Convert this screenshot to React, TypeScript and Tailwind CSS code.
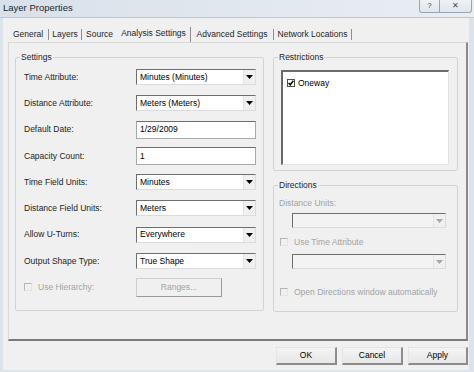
import React from 'react';

const Arrow = ({ disabled }: { disabled?: boolean }) => (
  <div className="w-[12px] h-full flex items-center justify-center bg-[#f0f0f0] border-l border-[#e2e2e2]">
    <svg width="7" height="4" viewBox="0 0 7 4">
      <path d="M0 0h7L3.5 4z" fill={disabled ? '#a8a8a8' : '#000'} />
    </svg>
  </div>
);

const Combo = ({ value, disabled, className = '' }: { value?: string; disabled?: boolean; className?: string }) => (
  <div
    className={`flex items-stretch border-t border-l border-[#6e6e6e] border-b border-r border-b-[#dcdcdc] border-r-[#dcdcdc] ${
      disabled ? 'bg-[#f3f3f3]' : 'bg-white'
    } ${className}`}
  >
    <div className="flex-1 flex items-center pl-[3px] text-black">{value}</div>
    <Arrow disabled={disabled} />
  </div>
);

const TextBox = ({ value }: { value: string }) => (
  <div className="w-[120px] h-[18px] bg-white border border-[#a9a9a9] border-t-[#6e6e6e] flex items-center pl-[3px] text-black">
    {value}
  </div>
);

const Check = ({ checked, disabled }: { checked?: boolean; disabled?: boolean }) => (
  <div
    className={`w-[8px] h-[8px] shrink-0 border ${
      disabled ? 'border-[#b5b5b5] border-b-[#e4e4e4] border-r-[#e4e4e4] bg-[#f0f0f0]' : 'border-[#4c4c4c] bg-white'
    } flex items-center justify-center`}
  >
    {checked && (
      <svg width="6" height="6" viewBox="0 0 6 6">
        <path d="M0.6 3l1.6 1.8L5.4 0.8" stroke="#000" strokeWidth="1.4" fill="none" />
      </svg>
    )}
  </div>
);

// group box; padding goes on the inner div so the legend stays near the corner
const Group = ({ title, className = '', inner = '', children }: { title: string; className?: string; inner?: string; children?: React.ReactNode }) => (
  <fieldset className={`border border-[#d3d3d3] rounded-[2px] ${className}`}>
    <legend className="ml-[4px] px-[1px] leading-[10px] text-[#1e1e1e]">{title}</legend>
    <div className={inner}>{children}</div>
  </fieldset>
);

const tabs = [
  { label: 'General', w: 'w-[41px]', sep: true },
  { label: 'Layers', w: 'w-[33px]', sep: true },
  { label: 'Source', w: 'w-[35px]', sep: false },
  { label: 'Analysis Settings', w: 'w-[74px]', sep: true, active: true },
  { label: 'Advanced Settings', w: 'w-[83px]', sep: true },
  { label: 'Network Locations', w: 'w-[78px]', sep: true },
];

const rows: { label: string; kind: 'combo' | 'text'; value: string }[] = [
  { label: 'Time Attribute:', kind: 'combo', value: 'Minutes (Minutes)' },
  { label: 'Distance Attribute:', kind: 'combo', value: 'Meters (Meters)' },
  { label: 'Default Date:', kind: 'text', value: '1/29/2009' },
  { label: 'Capacity Count:', kind: 'text', value: '1' },
  { label: 'Time Field Units:', kind: 'combo', value: 'Minutes' },
  { label: 'Distance Field Units:', kind: 'combo', value: 'Meters' },
  { label: 'Allow U-Turns:', kind: 'combo', value: 'Everywhere' },
  { label: 'Output Shape Type:', kind: 'combo', value: 'True Shape' },
];

export default function App() {
  return (
    <div className="w-[474px] h-[372px] bg-[#f0f0f0] overflow-hidden flex flex-col font-['Liberation_Sans',Arial,sans-serif] text-[8.5px] text-[#1e1e1e]">
      {/* title bar */}
      <div className="relative h-[18px] shrink-0 bg-gradient-to-r from-[#d8e1ea] to-[#e9eef3] border-b border-[#bcc7d2] flex items-center pl-[3px]">
        <span className="text-[9.5px] text-[#1b2733]">Layer Properties</span>
        <div className="absolute right-[2px] top-0 w-[53px] h-[13px] flex border border-t-0 border-[#9aa6b2] rounded-b-[3px] bg-gradient-to-b from-[#eef2f6] to-[#dfe6ec]">
          <div className="w-[20px] border-r border-[#9aa6b2] flex items-center justify-center text-[8px] text-[#3c4650]">?</div>
          <div className="flex-1 flex items-center justify-center text-[8px] text-[#3c4650]">✕</div>
        </div>
      </div>

      {/* client */}
      <div className="flex-1 flex flex-col border-l-[3px] border-r-[5px] border-b-[2px] border-[#dce4eb] pt-[8px]">
        {/* tabs */}
        <div className="h-[16px] flex ml-[5px]">
          {tabs.map((t) => (
            <div key={t.label} className={`${t.w} h-full flex items-center`}>
              <div className={`flex-1 text-center ${t.active ? 'pb-[2px]' : ''}`}>{t.label}</div>
              {t.sep && <div className={`w-px bg-[#8e8e8e] ${t.active ? 'h-[15px] self-end' : 'h-[11px]'}`} />}
            </div>
          ))}
        </div>

        {/* panel */}
        <div className="ml-[5px] w-[460px] h-[299px] border-t border-l border-[#d9d9d9] border-r-2 border-b-2 border-r-[#8a8a8a] border-b-[#7a7a7a] pt-[9px] pl-[6px] flex gap-[9px]">
          <Group title="Settings" className="w-[248px] h-[259px]" inner="pl-[8px] pr-[7px] pt-[2px]">
            {rows.map((r) => (
              <div key={r.label} className="h-[26.25px] flex items-center">
                <div className="w-[112px]">{r.label}</div>
                {r.kind === 'combo' ? (
                  <Combo value={r.value} className="w-[120px] h-[16px]" />
                ) : (
                  <TextBox value={r.value} />
                )}
              </div>
            ))}
            <div className="h-[26.25px] flex items-center">
              <div className="w-[112px] flex items-center gap-[6px] text-[#a3a3a3]">
                <Check disabled />
                <span>Use Hierarchy:</span>
              </div>
              <div className="w-[86px] h-[19px] border border-[#cfcfcf] border-b-[#9a9a9a] border-r-[#9a9a9a] bg-[#f0f0f0] flex items-center justify-center text-[#a3a3a3]">
                Ranges...
              </div>
            </div>
          </Group>

          <div className="w-[185px] flex flex-col gap-[9px]">
            <Group title="Restrictions" className="h-[119px]" inner="pl-[7px] pr-[8px] pt-[8px]">
              <div className="h-[95px] bg-white border-t-2 border-l-2 border-[#6a6a6a] border-r border-b border-r-[#e2e2e2] border-b-[#e2e2e2] pt-[5px] pl-[4px]">
                <div className="flex items-center gap-[3px] text-black">
                  <Check checked />
                  <span>Oneway</span>
                </div>
              </div>
            </Group>

            <Group title="Directions" className="h-[132px]" inner="pl-[5px] pr-[11px] text-[#a3a3a3]">
              <div className="mt-[8px] h-[10px] leading-[10px]">Distance Units:</div>
              <Combo disabled className="mt-[5px] ml-[13px] h-[15px]" />
              <div className="mt-[9px] h-[10px] flex items-center gap-[6px] ml-[1px]">
                <Check disabled />
                <span>Use Time Attribute</span>
              </div>
              <Combo disabled className="mt-[7px] ml-[13px] h-[15px]" />
              <div className="mt-[18px] h-[10px] flex items-center gap-[6px] ml-[1px]">
                <Check disabled />
                <span>Open Directions window automatically</span>
              </div>
            </Group>
          </div>
        </div>

        {/* buttons */}
        <div className="mt-[6px] flex justify-end gap-[5px] pr-[1px]">
          {['OK', 'Cancel', 'Apply'].map((b, i) => (
            <div
              key={b}
              className={`${i === 2 ? 'w-[60px]' : 'w-[61px]'} h-[18px] flex items-center justify-center border border-[#e4e4e4] border-r-2 border-b-2 border-r-[#8c8c8c] border-b-[#8c8c8c] bg-gradient-to-b from-[#f4f4f4] to-[#e7e7e7] text-black`}
            >
              {b}
            </div>
          ))}
        </div>
      </div>
    </div>
  );
}
